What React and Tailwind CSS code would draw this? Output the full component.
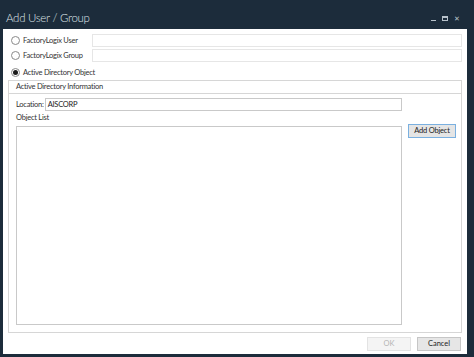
import React from "react";

const font = { fontFamily: "Lato, 'Open Sans', sans-serif" };

const Radio = ({ checked }) => (
  <span className="flex h-[9px] w-[9px] shrink-0 items-center justify-center rounded-full border border-[#8a8a8a] bg-white">
    {checked && <span className="h-[5px] w-[5px] rounded-full bg-[#1a1a1a]" />}
  </span>
);

const RadioRow = ({ label, checked, input }) => (
  <div className="flex h-[13px] items-center">
    <div className="flex w-[84px] items-center gap-[3px] pl-[3px]">
      <Radio checked={checked} />
      <span className="whitespace-nowrap text-[7.5px] leading-none tracking-[-0.25px] text-[#333]">{label}</span>
    </div>
    {input && <div className="h-[13px] flex-1 border border-[#e6e6e6] bg-white" />}
  </div>
);

const txt = "text-[7.5px] leading-none tracking-[-0.25px] text-[#333]";

export default function App() {
  return (
    <div className="flex h-[357px] w-[474px] flex-col bg-[#1c2c3b]" style={font}>
      {/* Title bar */}
      <div className="flex h-[29px] items-end justify-between pb-[6px] pl-[6px] pr-[14px]">
        <span className="text-[11.5px] font-light leading-none tracking-[-0.3px] text-[#dfe4e8]">Add User / Group</span>
        <div className="flex items-center gap-[6px] pb-[1px] text-[#b8c2cb]">
          <span className="mt-[4px] block h-[1px] w-[5px] bg-[#b8c2cb]" />
          <span className="block h-[5px] w-[6px] border border-t-2 border-[#b8c2cb]" />
          <span className="text-[7px] leading-none">✕</span>
        </div>
      </div>

      {/* Body */}
      <div className="mb-[3px] ml-[3px] mr-[7px] flex flex-1 flex-col bg-white px-[5px] pt-[5px]">
        <div className="flex flex-col gap-[2px]">
          <RadioRow label="FactoryLogix User" input />
          <RadioRow label="FactoryLogix Group" input />
          <div className="mt-[2px]">
            <RadioRow label="Active Directory Object" checked />
          </div>
        </div>

        {/* Group box */}
        <div className="mt-[1px] flex flex-1 flex-col border border-[#d6d6d6]">
          <div className="flex h-[13px] items-center border-b border-[#d6d6d6] px-[7px]">
            <span className={txt}>Active Directory Information</span>
          </div>
          <div className="grid flex-1 grid-cols-[1fr_48px] grid-rows-[auto_1fr] gap-x-[6px] pb-[7px] pl-[7px] pr-[5px] pt-[4px]">
            <div className="flex h-[13px] items-center">
              <span className={`mr-[1px] ${txt}`}>Location:</span>
              <div className="flex h-[13px] flex-1 items-center border border-[#c9c9c9] px-[2px]">
                <span className="text-[7.5px] leading-none tracking-[-0.25px] text-[#222]">AISCORP</span>
              </div>
            </div>
            <div />
            <div className="flex flex-col">
              <span className={`mt-[3px] h-[9px] ${txt}`}>Object List</span>
              <div className="mt-[3px] flex-1 border border-[#c9c9c9]" />
            </div>
            <div className="pt-[13px]">
              <button className="flex h-[14px] w-[48px] items-center justify-center border border-[#7ab0e0] bg-[#e5e5e5] text-[7.5px] leading-none tracking-[-0.2px] text-[#222]">
                Add Object
              </button>
            </div>
          </div>
        </div>

        {/* Footer */}
        <div className="flex justify-end gap-[6px] pb-[3px] pr-[1px] pt-[4px]">
          <button className="flex h-[14px] w-[44px] items-center justify-center border border-[#e3e3e3] bg-[#f4f4f4] text-[7.5px] leading-none text-[#b5b5b5]">
            OK
          </button>
          <button className="flex h-[14px] w-[44px] items-center justify-center border border-[#c6c6c6] bg-[#e6e6e6] text-[7.5px] leading-none text-[#222]">
            Cancel
          </button>
        </div>
      </div>
    </div>
  );
}
